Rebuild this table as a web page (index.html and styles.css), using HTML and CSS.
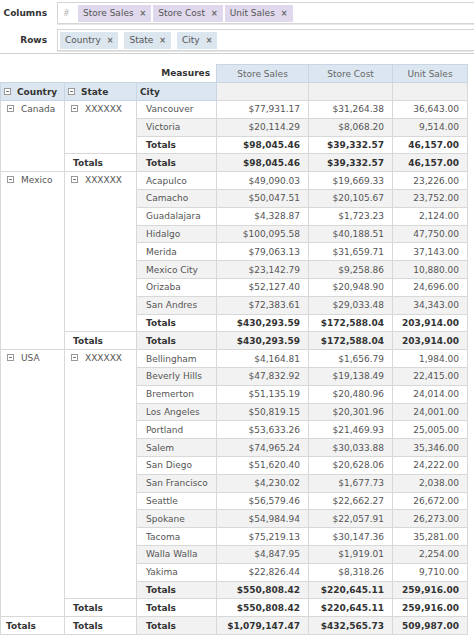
FILE: index.html
```html
<!DOCTYPE html>
<html>
<head>
<meta charset="utf-8">
<link rel="stylesheet" href="styles.css">
</head>
<body>
<div class="axes">
  <div class="axis">
    <div class="label">Columns</div>
    <div class="drop">
      <span class="hash">#</span>
      <span class="pill measure">Store Sales <span class="x">×</span></span>
      <span class="pill measure">Store Cost <span class="x">×</span></span>
      <span class="pill measure">Unit Sales <span class="x">×</span></span>
    </div>
  </div>
  <div class="axis">
    <div class="label">Rows</div>
    <div class="drop rows">
      <span class="pill dim">Country <span class="x">×</span></span>
      <span class="pill dim">State <span class="x">×</span></span>
      <span class="pill dim">City <span class="x">×</span></span>
    </div>
  </div>
</div>
<table class="pivot">
  <colgroup>
    <col class="c1"><col class="c2"><col class="c3"><col class="c4"><col class="c5"><col class="c6">
  </colgroup>
  <thead>
    <tr class="h1">
      <th colspan="3" class="measures">Measures</th>
      <th class="mh">Store Sales</th><th class="mh">Store Cost</th><th class="mh">Unit Sales</th>
    </tr>
    <tr class="h2">
      <th class="dh"><span class="tog"></span>Country</th>
      <th class="dh"><span class="tog"></span>State</th>
      <th class="dh">City</th>
      <th class="blank"></th><th class="blank"></th><th class="blank"></th>
    </tr>
  </thead>
  <tbody>
    <tr><td class="rh" rowspan="4"><span class="tog"></span>Canada</td><td class="rh" rowspan="3"><span class="tog"></span>XXXXXX</td><td class="city">Vancouver</td><td class="n">$77,931.17</td><td class="n">$31,264.38</td><td class="n">36,643.00</td></tr>
    <tr class="alt"><td class="city">Victoria</td><td class="n">$20,114.29</td><td class="n">$8,068.20</td><td class="n">9,514.00</td></tr>
    <tr class="tot"><td class="city">Totals</td><td class="n">$98,045.46</td><td class="n">$39,332.57</td><td class="n">46,157.00</td></tr>
    <tr class="alt tot"><td class="rh st">Totals</td><td class="city">Totals</td><td class="n">$98,045.46</td><td class="n">$39,332.57</td><td class="n">46,157.00</td></tr>

    <tr><td class="rh" rowspan="10"><span class="tog"></span>Mexico</td><td class="rh" rowspan="9"><span class="tog"></span>XXXXXX</td><td class="city">Acapulco</td><td class="n">$49,090.03</td><td class="n">$19,669.33</td><td class="n">23,226.00</td></tr>
    <tr class="alt"><td class="city">Camacho</td><td class="n">$50,047.51</td><td class="n">$20,105.67</td><td class="n">23,752.00</td></tr>
    <tr><td class="city">Guadalajara</td><td class="n">$4,328.87</td><td class="n">$1,723.23</td><td class="n">2,124.00</td></tr>
    <tr class="alt"><td class="city">Hidalgo</td><td class="n">$100,095.58</td><td class="n">$40,188.51</td><td class="n">47,750.00</td></tr>
    <tr><td class="city">Merida</td><td class="n">$79,063.13</td><td class="n">$31,659.71</td><td class="n">37,143.00</td></tr>
    <tr class="alt"><td class="city">Mexico City</td><td class="n">$23,142.79</td><td class="n">$9,258.86</td><td class="n">10,880.00</td></tr>
    <tr><td class="city">Orizaba</td><td class="n">$52,127.40</td><td class="n">$20,948.90</td><td class="n">24,696.00</td></tr>
    <tr class="alt"><td class="city">San Andres</td><td class="n">$72,383.61</td><td class="n">$29,033.48</td><td class="n">34,343.00</td></tr>
    <tr class="tot"><td class="city">Totals</td><td class="n">$430,293.59</td><td class="n">$172,588.04</td><td class="n">203,914.00</td></tr>
    <tr class="alt tot"><td class="rh st">Totals</td><td class="city">Totals</td><td class="n">$430,293.59</td><td class="n">$172,588.04</td><td class="n">203,914.00</td></tr>

    <tr><td class="rh" rowspan="15"><span class="tog"></span>USA</td><td class="rh" rowspan="14"><span class="tog"></span>XXXXXX</td><td class="city">Bellingham</td><td class="n">$4,164.81</td><td class="n">$1,656.79</td><td class="n">1,984.00</td></tr>
    <tr class="alt"><td class="city">Beverly Hills</td><td class="n">$47,832.92</td><td class="n">$19,138.49</td><td class="n">22,415.00</td></tr>
    <tr><td class="city">Bremerton</td><td class="n">$51,135.19</td><td class="n">$20,480.96</td><td class="n">24,014.00</td></tr>
    <tr class="alt"><td class="city">Los Angeles</td><td class="n">$50,819.15</td><td class="n">$20,301.96</td><td class="n">24,001.00</td></tr>
    <tr><td class="city">Portland</td><td class="n">$53,633.26</td><td class="n">$21,469.93</td><td class="n">25,005.00</td></tr>
    <tr class="alt"><td class="city">Salem</td><td class="n">$74,965.24</td><td class="n">$30,033.88</td><td class="n">35,346.00</td></tr>
    <tr><td class="city">San Diego</td><td class="n">$51,620.40</td><td class="n">$20,628.06</td><td class="n">24,222.00</td></tr>
    <tr class="alt"><td class="city">San Francisco</td><td class="n">$4,230.02</td><td class="n">$1,677.73</td><td class="n">2,038.00</td></tr>
    <tr><td class="city">Seattle</td><td class="n">$56,579.46</td><td class="n">$22,662.27</td><td class="n">26,672.00</td></tr>
    <tr class="alt"><td class="city">Spokane</td><td class="n">$54,984.94</td><td class="n">$22,057.91</td><td class="n">26,273.00</td></tr>
    <tr><td class="city">Tacoma</td><td class="n">$75,219.13</td><td class="n">$30,147.36</td><td class="n">35,281.00</td></tr>
    <tr class="alt"><td class="city">Walla Walla</td><td class="n">$4,847.95</td><td class="n">$1,919.01</td><td class="n">2,254.00</td></tr>
    <tr><td class="city">Yakima</td><td class="n">$22,826.44</td><td class="n">$8,318.26</td><td class="n">9,710.00</td></tr>
    <tr class="alt tot"><td class="city">Totals</td><td class="n">$550,808.42</td><td class="n">$220,645.11</td><td class="n">259,916.00</td></tr>
    <tr class="tot"><td class="rh st">Totals</td><td class="city">Totals</td><td class="n">$550,808.42</td><td class="n">$220,645.11</td><td class="n">259,916.00</td></tr>

    <tr class="alt tot grand"><td class="rh st gt">Totals</td><td class="rh st">Totals</td><td class="city">Totals</td><td class="n">$1,079,147.47</td><td class="n">$432,565.73</td><td class="n">509,987.00</td></tr>
  </tbody>
</table>
</body>
</html>
```

FILE: styles.css
```css
body {
  margin: 0;
  font-family: "DejaVu Sans", Verdana, sans-serif;
  font-size: 9px;
  color: #555;
  background: #fff;
}

.axes {
  padding: 1px 0 1px;
  border-bottom: 1px solid #d0d0d0;
}

.axis {
  display: flex;
  align-items: center;
  height: 24px;
}

.axis + .axis {
  margin-top: 3px;
}

.label {
  width: 47px;
  padding-right: 10px;
  text-align: right;
  font-weight: bold;
  color: #333;
}

.drop {
  flex: 1;
  height: 20px;
  display: flex;
  align-items: center;
  gap: 2px;
  padding-left: 4px;
  border: 1px solid #d6d6d6;
  border-right: none;
  box-shadow: 0 1px 0 #e6e6e6;
  background: #fff;
}

.drop.rows {
  gap: 6px;
  padding-left: 2px;
}

.hash {
  color: #b5b5b5;
  font-size: 8px;
  width: 13px;
  text-align: left;
  padding-left: 1px;
}

.pill {
  display: inline-flex;
  align-items: center;
  height: 17px;
  padding: 0 5px;
  color: #555;
  white-space: nowrap;
}

.pill.measure {
  background: #e0d8ec;
}

.pill.dim {
  background: #dce6ef;
}

.pill .x {
  font-weight: bold;
  font-size: 8px;
  margin-left: 6px;
  color: #666;
}

.pivot {
  margin-top: 10px;
  border-collapse: collapse;
  table-layout: fixed;
  width: 467px;
}

.c1 { width: 64px; }
.c2 { width: 72px; }
.c3 { width: 80px; }
.c4 { width: 92px; }
.c5 { width: 84px; }
.c6 { width: 75px; }

.pivot th,
.pivot td {
  height: 17.8px;
  padding: 0;
  white-space: nowrap;
  overflow: hidden;
  border: 1px solid #d8d8d8;
  box-sizing: border-box;
}

.h1 th,
.h2 th {
  height: 18px;
}

.measures {
  border: none !important;
  text-align: right;
  padding-right: 6px !important;
  font-weight: bold;
  color: #333;
}

.mh {
  background: #dce6f0;
  border-color: #c9d5e2 !important;
  font-weight: normal;
  color: #666;
  text-align: center;
}

.dh {
  background: #dce6f0;
  border-color: #c9d5e2 !important;
  text-align: left;
  font-weight: bold;
  color: #333;
  padding-left: 3px !important;
}

.dh .tog {
  margin-right: 6px;
}

.blank {
  background: #f1f1f1;
}

.tog {
  display: inline-block;
  width: 7px;
  height: 7px;
  border: 1px solid #999;
  box-sizing: border-box;
  margin-right: 7px;
  vertical-align: 0;
  position: relative;
  background: #fff;
}

.tog::after {
  content: "";
  position: absolute;
  left: 1px;
  right: 1px;
  top: 2px;
  height: 1px;
  background: #777;
}

.rh {
  vertical-align: top;
  padding-left: 6px !important;
  padding-top: 3px !important;
  background: #fff;
  color: #555;
}

.rh.st {
  vertical-align: middle;
  padding-top: 0 !important;
  padding-left: 8px !important;
  font-weight: bold;
  color: #333;
}

.rh.gt {
  padding-left: 5px !important;
}

.city {
  padding-left: 9px !important;
  background: #fff;
}

.n {
  text-align: right;
  padding-right: 8px !important;
  background: #fff;
}

.alt .city,
.alt .n {
  background: #f2f2f2;
}

.tot .city,
.tot .n {
  font-weight: bold;
  color: #333;
}
```
